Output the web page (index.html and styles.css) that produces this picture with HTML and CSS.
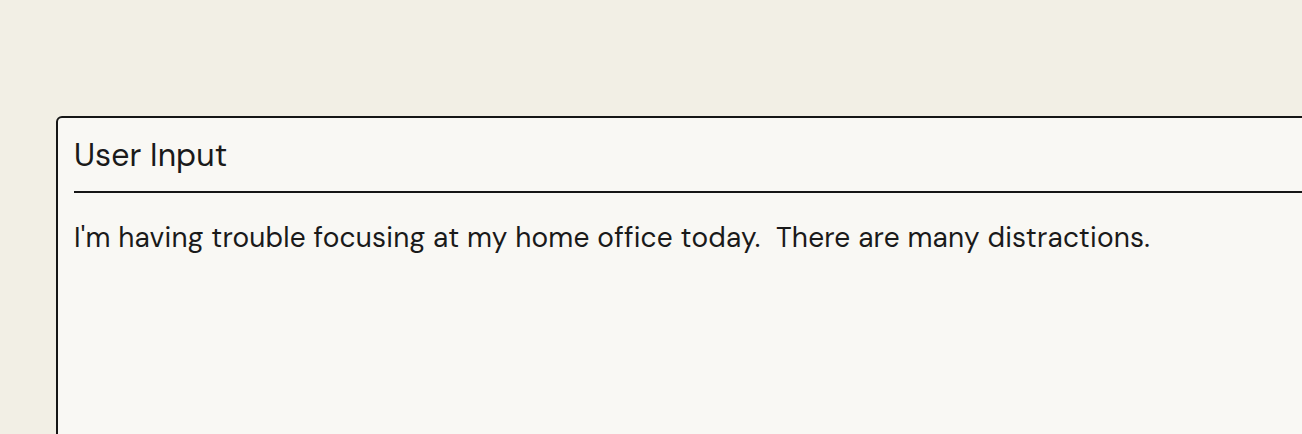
FILE: index.html
```html
<!DOCTYPE html>
<html lang="en">
<head>
<meta charset="utf-8">
<title>User Input</title>
<link rel="stylesheet" href="styles.css">
</head>
<body>
<main class="page">
  <section class="card">
    <h2 class="card-title">User Input</h2>
    <div class="card-body">
      <p class="card-text">I'm having trouble focusing at my home office today.&nbsp; There are many distractions.</p>
    </div>
  </section>
</main>
</body>
</html>
```

FILE: styles.css
```css
html, body {
  margin: 0;
  padding: 0;
  height: 100%;
  overflow: hidden;
  background: #f2efe5;
}

.page {
  padding: 116px 0 0 56px;
  font-family: "DM Sans", Inter, "Noto Sans", sans-serif;
  color: #1a1a1a;
}

.card {
  width: 1400px;
  height: 500px;
  box-sizing: border-box;
  background: #f9f8f4;
  border: 2px solid #161616;
  border-radius: 6px;
  padding: 0 0 0 16px;
}

.card-title {
  margin: 0;
  font-size: 32px;
  font-weight: 400;
  letter-spacing: 0.1px;
  line-height: 40px;
  padding: 17px 0 16px;
  border-bottom: 2px solid #161616;
}

.card-text {
  margin: 0;
  padding-top: 27px;
  font-size: 28px;
  letter-spacing: 0.22px;
  line-height: 36px;
}
```
